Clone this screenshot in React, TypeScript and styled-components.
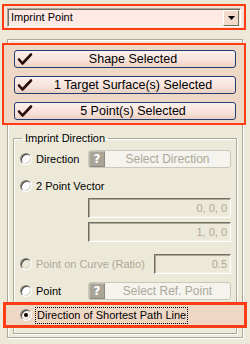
import { createGlobalStyle } from 'styled-components';
import styled from 'styled-components';

const GlobalStyle = createGlobalStyle`
  html, body {
    margin: 0;
    padding: 0;
    background: #ece9d8;
  }
  body {
    font-family: "Liberation Sans", Arial, sans-serif;
    font-size: 11px;
    color: #000;
  }
  * {
    box-sizing: border-box;
  }
`;

const Screen = styled.div`
  width: 250px;
  height: 344px;
  overflow: hidden;
  background: #ece9d8;
  display: flex;
  flex-direction: column;
  padding-top: 4px;
`;

const Mark = styled.div<{ $w: number; $line?: number }>`
  width: ${(p) => p.$w}px;
  border: ${(p) => p.$line ?? 2}px solid #ff3c14;
  flex-shrink: 0;
`;

const ComboMark = styled(Mark)`
  margin-left: 2px;
  padding: 2px 3px 1px 3px;
  background: #f8e2d8;
`;

const Combo = styled.div`
  height: 19px;
  display: flex;
  align-items: center;
  justify-content: space-between;
  padding: 0 1px 0 2px;
  background: #ffe9e4;
  border: 1px solid;
  border-color: #aca899 #fff #fff #aca899;
  box-shadow: inset 1px 1px 0 #716f64, inset -1px -1px 0 #f1efe2;
`;

const ComboText = styled.span`
  padding-left: 1px;
  line-height: 15px;
`;

const ComboArrow = styled.div`
  width: 16px;
  height: 16px;
  display: flex;
  align-items: center;
  justify-content: center;
  background: #f2dacb;
  border: 1px solid;
  border-color: #fff #716f64 #716f64 #fff;
`;

const Panel = styled.div`
  margin: 9px 0 0 7px;
  width: 236px;
  display: flex;
  flex-direction: column;
  border: 1px solid #aca899;
  box-shadow: inset 1px 1px 0 #fff, 1px 1px 0 #fff;
`;

const ButtonsMark = styled(Mark)`
  margin: 3px 0 0 -6px;
  padding: 5px 8px 3px 10px;
  background: #efd7c6;
  display: flex;
  flex-direction: column;
  gap: 8px;
`;

const StateButton = styled.div`
  width: 222px;
  height: 18px;
  display: flex;
  align-items: center;
  border: 1px solid #1f3f72;
  border-radius: 3px;
  background: linear-gradient(#fdf0ec, #f6e2da 60%, #ecd0c2);
`;

const CheckIcon = styled.svg`
  margin-left: 2px;
  flex-shrink: 0;
`;

const StateLabel = styled.span`
  flex: 1;
  text-align: center;
  font-size: 12.5px;
  padding-right: 2px;
`;

const Group = styled.fieldset`
  margin: 7px 5px 3px 5px;
  padding: 5px 0 5px 0;
  min-width: 0;
  border: 1px solid #aca899;
  box-shadow: inset 1px 1px 0 #fff, 1px 1px 0 #fff;
`;

const Legend = styled.legend`
  margin-left: 8px;
  padding: 0 3px;
  line-height: 13px;
  font-size: 11px;
`;

const Row = styled.div<{ $h: number; $top: number }>`
  height: ${(p) => p.$h}px;
  margin-top: ${(p) => p.$top}px;
  display: flex;
  align-items: center;
  padding: 0 5px 0 6px;
`;

const Radio = styled.span<{ $disabled?: boolean; $checked?: boolean }>`
  width: 12px;
  height: 12px;
  flex-shrink: 0;
  border-radius: 50%;
  display: flex;
  align-items: center;
  justify-content: center;
  border: 1px solid;
  border-color: #8a877a #fff #fff #8a877a;
  box-shadow: inset 1px 1px 0 #404040, inset -1px -1px 0 #d4d0c8;
  background: ${(p) => (p.$disabled ? '#ece9d8' : p.$checked ? '#fdf0ec' : '#fff')};

  &::after {
    content: '';
    display: ${(p) => (p.$checked ? 'block' : 'none')};
    width: 4px;
    height: 4px;
    border-radius: 50%;
    background: #000;
  }
`;

const Label = styled.span<{ $disabled?: boolean }>`
  margin-left: 4px;
  white-space: nowrap;
  color: ${(p) => (p.$disabled ? '#aca899' : '#000')};
`;

const PickButton = styled.div`
  margin-left: auto;
  width: 143px;
  height: 18px;
  display: flex;
  align-items: center;
  border: 1px solid #c9c7ba;
  border-radius: 3px;
  background: #f4f3ee;
`;

const HelpIcon = styled.span`
  width: 16px;
  height: 16px;
  flex-shrink: 0;
  display: flex;
  align-items: center;
  justify-content: center;
  background: #a8a597;
  border: 1px solid;
  border-color: #c4c2b6 #8c8a7e #8c8a7e #c4c2b6;
  color: #fff;
  font-weight: bold;
  font-size: 12px;
  font-family: "DejaVu Sans", sans-serif;
`;

const PickLabel = styled.span`
  flex: 1;
  text-align: center;
  font-size: 12px;
  color: #aca899;
  white-space: nowrap;
`;

const Field = styled.div<{ $w: number }>`
  margin-left: auto;
  width: ${(p) => p.$w}px;
  height: 20px;
  display: flex;
  align-items: center;
  justify-content: flex-end;
  padding-right: 3px;
  color: #aca899;
  border: 1px solid;
  border-color: #716f64 #fff #fff #716f64;
  box-shadow: inset 1px 1px 0 #aca899, inset -1px -1px 0 #f1efe2;
`;

const ShortestMark = styled(Mark)`
  margin: 2px 0 0 -11px;
  height: 26px;
  padding-left: 14px;
  display: flex;
  align-items: center;
  background: #efd7c6;
`;

const Focus = styled.span`
  margin-left: 3px;
  padding: 1px 1px;
  line-height: 13px;
  border: 1px dotted #000;
  white-space: nowrap;
`;

const checks = ['Shape Selected', '1 Target Surface(s) Selected', '5 Point(s) Selected'];

function Check() {
  return (
    <CheckIcon width="16" height="14" viewBox="0 0 16 14">
      <path d="M2 7.5 L5.5 11.5 L14 2.5" fill="none" stroke="#2a0e08" strokeWidth="2.6" strokeLinecap="round" strokeLinejoin="round" />
    </CheckIcon>
  );
}

function Pick({ text }: { text: string }) {
  return (
    <PickButton>
      <HelpIcon>?</HelpIcon>
      <PickLabel>{text}</PickLabel>
    </PickButton>
  );
}

export default function App() {
  return (
    <Screen>
      <GlobalStyle />
      <ComboMark $w={244}>
        <Combo>
          <ComboText>Imprint Point</ComboText>
          <ComboArrow>
            <svg width="7" height="4" viewBox="0 0 7 4">
              <path d="M0 0 H7 L3.5 4 Z" fill="#000" />
            </svg>
          </ComboArrow>
        </Combo>
      </ComboMark>

      <Panel>
        <ButtonsMark $w={244}>
          {checks.map((c) => (
            <StateButton key={c}>
              <Check />
              <StateLabel>{c}</StateLabel>
            </StateButton>
          ))}
        </ButtonsMark>

        <Group>
          <Legend>Imprint Direction</Legend>
          <Row $h={18} $top={0}>
            <Radio />
            <Label>Direction</Label>
            <Pick text="Select Direction" />
          </Row>
          <Row $h={16} $top={10}>
            <Radio />
            <Label>2 Point Vector</Label>
          </Row>
          <Row $h={20} $top={4}>
            <Field $w={143}>0, 0, 0</Field>
          </Row>
          <Row $h={20} $top={4}>
            <Field $w={143}>1, 0, 0</Field>
          </Row>
          <Row $h={20} $top={12}>
            <Radio $disabled />
            <Label $disabled>Point on Curve (Ratio)</Label>
            <Field $w={77}>0.5</Field>
          </Row>
          <Row $h={18} $top={8}>
            <Radio />
            <Label>Point</Label>
            <Pick text="Select Ref. Point" />
          </Row>
          <ShortestMark $w={244} $line={3}>
            <Radio $checked />
            <Focus>Direction of Shortest Path Line</Focus>
          </ShortestMark>
        </Group>
      </Panel>
    </Screen>
  );
}
